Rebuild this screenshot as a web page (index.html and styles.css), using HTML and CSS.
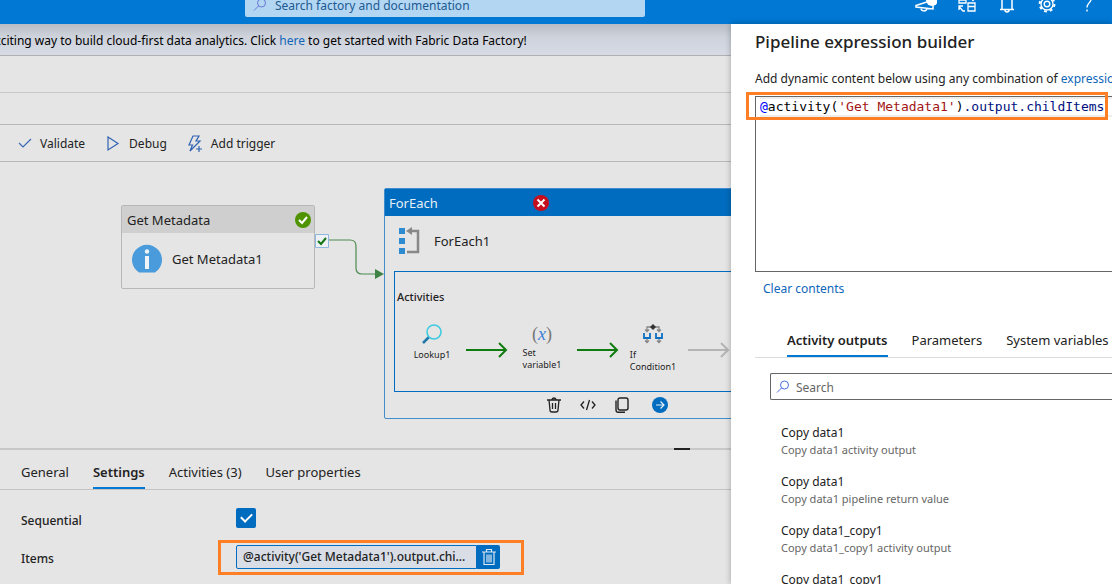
FILE: index.html
```html
<!DOCTYPE html>
<html lang="en">
<head>
    <meta charset="UTF-8">
    <meta name="viewport" content="width=device-width, initial-scale=1.0">
    <title>Azure Data Factory</title>
    <link rel="stylesheet" href="styles.css">
</head>
<body>
    <header class="topbar">
        <label class="topbar-search">
            <svg width="14" height="14" viewBox="0 0 14 14" fill="none" stroke="#6a78d8"><circle cx="8.5" cy="5" r="4"/><path d="M5.5 8L1 12.5"/></svg>
            <input type="text" placeholder="Search factory and documentation" aria-label="Search factory and documentation">
        </label>
        <nav class="topbar-icons">
            <button type="button" aria-label="Announcements">
                <svg width="24" height="20" viewBox="0 0 24 20" fill="none" stroke="#fff" stroke-width="1.5"><path d="M3 11.500L20 6v9L3 13zM8 14c0 3.500 5 4 6 .5"/><circle cx="19" cy="6" r="6" fill="#fff" stroke="none"/></svg>
            </button>
            <button type="button" aria-label="Switch factory">
                <svg width="20" height="20" viewBox="0 0 20 20" fill="none" stroke="#fff" stroke-width="1.300"><path d="M2 3h7v6H2zM2 6h7M11 9h7v8h-7zM11 12.500h7M12 3h4v3M14 4.500L16 6.500l2-2M8 17H6L2 12.500M2 16v-4h4"/></svg>
            </button>
            <button type="button" aria-label="Notifications">
                <svg width="20" height="20" viewBox="0 0 20 20" fill="none" stroke="#fff" stroke-width="1.500"><path d="M5 15V7a5 5 0 0 1 10 0v8M3 15.500h14M8 16c0 2.500 4 2.500 4 0"/></svg>
            </button>
            <button type="button" aria-label="Settings">
                <svg width="20" height="20" viewBox="0 0 20 20" fill="none" stroke="#fff"><circle cx="10" cy="10" r="2.800" stroke-width="1.400"/><circle cx="10" cy="10" r="6" stroke-width="1.300"/><circle cx="10" cy="10" r="7.400" stroke-width="2" stroke-dasharray="2.900 2.910"/></svg>
            </button>
            <button type="button" aria-label="Help">
                <svg width="20" height="20" viewBox="0 0 20 20" fill="none" stroke="#fff" stroke-width="1.400"><path d="M6.500 6c0-5 7.500-5 7.500-.5 0 3-4 3.500-4 8M10 15.500v2"/></svg>
            </button>
        </nav>
    </header>

    <div class="layout">
        <main class="workspace">
            <div class="notice"><p>exciting way to build cloud-first data analytics. Click <a href="#">here</a> to get started with Fabric Data Factory!</p></div>
            <div class="strip strip-top"></div>
            <div class="strip"></div>
            <div class="toolbar">
                <button type="button">
                    <svg width="14" height="14" viewBox="0 0 14 14" fill="none" stroke="#3a68b5" stroke-width="1.200"><path d="M1 6l4 4 8-8"/></svg>
                    Validate
                </button>
                <button type="button">
                    <svg width="16" height="16" viewBox="0 0 16 16" fill="none" stroke="#2f62b3" stroke-width="1.200"><path d="M3 1l10 6.500L3 14z"/></svg>
                    Debug
                </button>
                <button type="button">
                    <svg width="16" height="18" viewBox="0 0 16 18" fill="none" stroke="#2f62b3" stroke-width="1.200"><path d="M6 1h6L9 6h4L3 16l2.500-6H2zM12 11v6M9 14h6"/></svg>
                    Add trigger
                </button>
            </div>

            <section class="canvas">
                <article class="node metadata">
                    <div class="node-head">
                        <span>Get Metadata</span>
                        <svg width="16" height="16" viewBox="0 0 16 16"><circle cx="8" cy="8" r="8" fill="#4f9400"/><path d="M4 8l3 3 5-6" fill="none" stroke="#fff" stroke-width="2"/></svg>
                    </div>
                    <div class="node-body">
                        <svg width="30" height="30" viewBox="0 0 30 30"><path d="M7 28.500a15 15 0 1 1 16 0z" fill="#4a9bdb"/><circle cx="15" cy="7.500" r="2.200" fill="#f0f4f8"/><path d="M13 12h4v13h-4z" fill="#f0f4f8"/></svg>
                        <span>Get Metadata1</span>
                    </div>
                </article>

                <svg class="connector" width="56" height="42" viewBox="0 0 56 42"><path d="M0 5h22q6 0 6 6v22q0 6 6 6h13" transform="translate(0 -1)" fill="none" stroke="#4b8b50" stroke-width="1.200"/><path d="M47 33l9 5-9 5z" fill="#3f8446"/></svg>
                <svg class="success" width="14" height="14" viewBox="0 0 14 14"><path d="M.5.5h13v13H.5z" fill="#edf1f5" stroke="#8fb6dc"/><path d="M3 7l3 3 5-6" fill="none" stroke="#127512" stroke-width="2"/></svg>

                <article class="node foreach">
                    <div class="node-head">
                        <span>ForEach</span>
                        <svg width="16" height="16" viewBox="0 0 16 16"><circle cx="8" cy="8" r="8" fill="#c50f1f"/><path d="M4.500 4.500l7 7M11.500 4.500l-7 7" stroke="#fff" stroke-width="2"/></svg>
                    </div>
                    <div class="node-body">
                        <svg width="22" height="28" viewBox="0 0 22 28"><path d="M1 1h6v6H1zM1 11h6v6H1zM1 21h6v6H1z" fill="#2f8bd0"/><path d="M12 4h8v21H9" fill="none" stroke="#888" stroke-width="2.500"/><path d="M14 0v8L8 4z" fill="#888"/></svg>
                        <span>ForEach1</span>
                    </div>
                    <div class="inner">
                        <h2>Activities</h2>
                        <div class="steps">
                            <div class="step lookup">
                                <svg width="20" height="20" viewBox="0 0 20 20" fill="none"><path d="M7 13l-6 6" stroke="#1f78a8" stroke-width="2.500"/><circle cx="12" cy="8" r="7" stroke="#3ecbe0" stroke-width="1.600"/></svg>
                                <span>Lookup1</span>
                            </div>
                            <svg class="arrow" width="42" height="16" viewBox="0 0 42 16" fill="none" stroke="#107c10" stroke-width="2"><path d="M0 8h40M33 1l7 7-7 7"/></svg>
                            <div class="step variable">
                                <span class="var-icon">(<i>x</i>)</span>
                                <span>Set<br>variable1</span>
                            </div>
                            <svg class="arrow" width="42" height="16" viewBox="0 0 42 16" fill="none" stroke="#107c10" stroke-width="2"><path d="M0 8h40M33 1l7 7-7 7"/></svg>
                            <div class="step condition">
                                <svg width="20" height="20" viewBox="0 0 20 20" fill="none"><path d="M8 3H4v4M12 3h4v4M4 14v4M16 14v4M2 5.500l2 2 2-2M14 5.500l2 2 2-2M2 16.500l2 2 2-2M14 16.500l2 2 2-2" stroke="#858585" stroke-width="1.300"/><path d="M10 0l3 3-3 3-3-3z" fill="#333"/><path d="M1 9v5h6V9M13 9v5h6V9" stroke="#0f6fc0" stroke-width="1.800"/></svg>
                                <span>If<br>Condition1</span>
                            </div>
                            <svg class="arrow" width="42" height="16" viewBox="0 0 42 16" fill="none" stroke="#b5b5b5" stroke-width="2"><path d="M0 8h40M33 1l7 7-7 7"/></svg>
                        </div>
                    </div>
                    <div class="node-actions">
                        <button type="button" aria-label="Delete"><svg width="16" height="16" viewBox="0 0 16 16" fill="none" stroke="#222" stroke-width="1.300"><path d="M1 3h14M5.500 3q2.500-4 5 0M3 3l1 10q0 2 2 2h4q2 0 2-2l1-10M6.500 6v6M9.500 6v6"/></svg></button>
                        <button type="button" aria-label="View code"><svg width="16" height="16" viewBox="0 0 16 16" fill="none" stroke="#222" stroke-width="1.300"><path d="M4 4.500L1 8l3 3.500M12 4.500L15 8l-3 3.500M9.500 3l-3 10"/></svg></button>
                        <button type="button" aria-label="Clone"><svg width="16" height="16" viewBox="0 0 16 16" fill="none" stroke="#222" stroke-width="1.400"><rect x="4" y="1" width="10" height="12" rx="2"/><path d="M2 3.500V13q0 2.300 2.300 2.300H11"/></svg></button>
                        <button type="button" class="run" aria-label="Run"><svg width="16" height="16" viewBox="0 0 16 16" fill="none" stroke="#e6eef6" stroke-width="1.200"><circle cx="8" cy="8" r="8" fill="#006cbf" stroke="none"/><path d="M4 8h8M8.500 4.500L12 8l-3.500 3.500"/></svg></button>
                    </div>
                </article>
            </section>

            <div class="splitter"><span></span></div>

            <section class="properties">
                <div class="tabs">
                    <button type="button">General</button>
                    <button type="button" class="active">Settings</button>
                    <button type="button">Activities (3)</button>
                    <button type="button">User properties</button>
                </div>
                <form class="settings">
                    <label for="sequential">Sequential</label>
                    <input type="checkbox" id="sequential" checked>
                    <label for="items">Items</label>
                    <div class="items-field">
                        <input type="text" id="items" value="@activity('Get Metadata1').output.chi..." readonly>
                        <button type="button" aria-label="Delete expression"><svg width="14" height="18" viewBox="0 0 14 18" fill="none" stroke="#dce8f3" stroke-width="1.200"><path d="M0 4h14M4.500 4V1.500h5V4M2 4v12.500h10V4M5 6.500v8M7 6.500v8M9 6.500v8"/></svg></button>
                    </div>
                </form>
            </section>
        </main>

        <aside class="panel">
            <h1>Pipeline expression builder</h1>
            <p class="hint">Add dynamic content below using any combination of <a href="#">expressions</a></p>
            <div class="editor-wrap">
                <div class="editor" role="textbox" aria-label="Expression" aria-multiline="true" contenteditable="true" spellcheck="false"><div class="line"><span class="at">@</span>activity(<span class="str">'Get Metadata1'</span>)<span class="prop">.output.childItems</span></div></div>
                <div class="mark mark-editor"></div>
            </div>
            <a class="clear" href="#">Clear contents</a>
            <div class="tabs">
                <button type="button" class="active">Activity outputs</button>
                <button type="button">Parameters</button>
                <button type="button">System variables</button>
            </div>
            <label class="panel-search">
                <svg width="14" height="14" viewBox="0 0 14 14" fill="none" stroke="#4a6fe0"><circle cx="8.500" cy="5" r="4"/><path d="M5.500 8L1 12.500"/></svg>
                <input type="text" placeholder="Search" aria-label="Search">
            </label>
            <ul class="outputs">
                <li><b>Copy data1</b><span>Copy data1 activity output</span></li>
                <li><b>Copy data1</b><span>Copy data1 pipeline return value</span></li>
                <li><b>Copy data1_copy1</b><span>Copy data1_copy1 activity output</span></li>
                <li><b>Copy data1_copy1</b></li>
            </ul>
        </aside>
    </div>
    <div class="mark mark-items"></div>
</body>
</html>
```

FILE: styles.css
```css
* {
    box-sizing: border-box;
}

body {
    margin: 0;
    height: 100vh;
    display: flex;
    flex-direction: column;
    overflow: hidden;
    font-family: "Noto Sans", "Open Sans", sans-serif;
    font-size: 12px;
    line-height: 16px;
    color: #222;
    background-color: #fff;
}

button,
input {
    font: inherit;
    color: inherit;
}

button {
    border: 0;
    padding: 0;
    background: none;
    white-space: nowrap;
}

a {
    color: #0f66b8;
    text-decoration: none;
}

h1,
h2,
p,
ul {
    margin: 0;
    padding: 0;
}

svg {
    display: block;
    flex: none;
}

/* Top bar */
.topbar {
    height: 24px;
    flex: none;
    display: flex;
    align-items: flex-end;
    justify-content: space-between;
    padding: 0 15px 7px 245px;
    background-color: #0078d4;
}

.topbar-search {
    flex: 0 1 400px;
    height: 24px;
    display: flex;
    align-items: center;
    gap: 8px;
    padding-left: 8px;
    border-radius: 2px;
    background-color: #b3d6f2;
}

.topbar-search input {
    flex: 1;
    border: 0;
    background: none;
    padding: 2px 0 0;
}

.topbar-search input::placeholder {
    color: #1c5a94;
    opacity: 1;
}

.topbar-icons {
    display: flex;
    gap: 20px;
    margin-bottom: 3px;
}

/* Workspace */
.layout {
    flex: 1;
    min-height: 0;
    display: flex;
}

.workspace {
    flex: 1;
    min-width: 0;
    display: flex;
    flex-direction: column;
    background-color: #e5e5e5;
}

.notice {
    height: 32px;
    display: flex;
    align-items: center;
    overflow: hidden;
    padding-top: 2px;
    white-space: nowrap;
    color: #000;
    border-bottom: 1px solid #b0b0b0;
    background: linear-gradient(#b7bcc5, #cdd2db 40%, #d7dbe5);
}

.notice p {
    text-indent: -12px;
}

.strip {
    height: 32px;
    border-bottom: 1px solid #b8b8b8;
}

.strip-top {
    height: 37px;
    border-color: #c8c8c8;
}

.toolbar {
    height: 37px;
    display: flex;
    align-items: center;
    gap: 20px;
    padding: 1px 0 0 18px;
    border-bottom: 1px solid #b8b8b8;
}

.toolbar button {
    display: flex;
    align-items: center;
    gap: 8px;
}

/* Canvas */
.canvas {
    flex: 1;
    min-height: 0;
    position: relative;
    overflow: hidden;
}

.node {
    position: absolute;
    font-size: 13px;
}

.node-head {
    height: 27px;
    display: flex;
    align-items: center;
}

.node-body {
    display: flex;
    align-items: center;
}

.metadata {
    left: 121px;
    top: 43px;
    width: 194px;
    height: 84px;
    border: 1px solid #b8b8b8;
    border-radius: 2px;
}

.metadata .node-head {
    justify-content: space-between;
    padding: 0 3px 0 5px;
    background-color: #cfcfcf;
}

.metadata .node-body {
    gap: 10px;
    padding: 11px 10px;
}

.connector {
    position: absolute;
    left: 328px;
    top: 74px;
    overflow: visible;
}

.success {
    position: absolute;
    left: 315px;
    top: 72px;
}

.foreach {
    left: 384px;
    top: 26px;
    width: 560px;
    border: 1px solid #3f8dcd;
    border-radius: 2px;
}

.foreach .node-head {
    gap: 95px;
    padding-left: 4px;
    color: #e6eef6;
    background-color: #006cbf;
}

.foreach .node-body {
    height: 50px;
    gap: 14px;
    padding-left: 13px;
}

.inner {
    height: 121px;
    margin: 5px 9px 0;
    padding: 17px 0 0 2px;
    border: 1px solid #006cbf;
}

.inner h2 {
    font-size: 11px;
    line-height: 16px;
    font-weight: 500;
}

.steps {
    display: grid;
    grid-template-columns: 54px 56px 55px 51px 60px 42px;
    padding: 19px 0 0 15px;
}

.step {
    display: flex;
    flex-direction: column;
    width: 40px;
    align-items: center;
    gap: 5px;
    font-size: 9px;
    line-height: 12px;
}

.step.variable {
    gap: 3px;
}

.step.condition {
    width: 50px;
}

.var-icon {
    font: 18px/20px "Liberation Serif", serif;
    color: #777;
}

.var-icon i {
    color: #3d7fd6;
}

.arrow {
    margin-top: 18px;
}

.node-actions {
    height: 26px;
    display: flex;
    align-items: center;
    gap: 18px;
    padding-left: 161px;
}

.node-actions .run {
    margin-left: 4px;
}

.splitter {
    height: 2px;
    display: flex;
    justify-content: flex-end;
    padding-right: 41px;
    background-color: #c8c8c8;
}

.splitter span {
    width: 16px;
    background-color: #222;
}

/* Tabs */
.tabs {
    display: flex;
    gap: 24px;
    overflow: hidden;
    font-size: 13px;
}

.tabs button {
    border-bottom: 2px solid transparent;
}

.tabs .active {
    font-weight: 600;
    border-color: #0078d4;
}

.properties {
    height: 134px;
}

.properties .tabs {
    height: 40px;
    padding-left: 21px;
    border-bottom: 1px solid #c4c4c4;
}

.properties .tabs button {
    padding-top: 7px;
}

.settings {
    display: grid;
    grid-template-columns: 215px 264px;
    grid-auto-rows: 38px;
    align-items: center;
    padding: 10px 0 0 21px;
}

.settings label {
    padding-top: 3px;
    font-weight: 500;
}

.settings input[type="checkbox"] {
    appearance: none;
    width: 20px;
    height: 20px;
    margin: 0 0 2px;
    display: grid;
    place-items: center;
    border-radius: 2px;
    background-color: #006cbf;
}

.settings input[type="checkbox"]::after {
    content: "";
    width: 9px;
    height: 5px;
    margin-bottom: 3px;
    border: solid #fff;
    border-width: 0 0 2px 2px;
    transform: rotate(-45deg);
}

.items-field {
    height: 24px;
    display: flex;
}

.items-field input {
    flex: 1;
    min-width: 0;
    padding: 0 6px;
    border: 1px solid #006cbf;
    border-radius: 2px 0 0 2px;
    font-weight: 500;
    background-color: #d8dde6;
}

.items-field button {
    width: 23px;
    display: grid;
    place-items: center;
    border-radius: 0 2px 2px 0;
    background-color: #006cbf;
}

/* Expression panel */
.panel {
    flex: 0 0 381px;
    min-width: 0;
    padding: 6px 0 0 24px;
    position: relative;
    overflow: hidden;
    background-color: #fff;
    box-shadow: 0 0 6px rgba(0, 0, 0, 0.3);
}

.panel h1 {
    font-size: 17px;
    line-height: 24px;
    font-weight: 500;
}

.hint {
    margin-top: 17px;
    white-space: nowrap;
}

.editor-wrap {
    position: relative;
    margin-top: 9px;
}

.editor {
    height: 176px;
    padding-left: 4px;
    border: 1px solid #666;
    border-right: 0;
    font: 13px/18px "DejaVu Sans Mono", monospace;
    color: #000;
}

.line {
    height: 20px;
    border: 2px solid #eee;
    border-right: 0;
    border-left: 0;
    line-height: 15px;
    white-space: nowrap;
}

.at {
    color: #00f;
}

.str {
    color: #a31515;
}

.prop {
    color: #001080;
}

.mark {
    position: absolute;
    border: 3px solid #ff7f27;
    pointer-events: none;
}

.mark-editor {
    left: -9px;
    top: -4px;
    right: 4px;
    height: 28px;
}

.mark-items {
    left: 218px;
    bottom: 9px;
    width: 306px;
    height: 35px;
}

.clear {
    display: block;
    margin: 9px 0 0 8px;
}

.panel .tabs {
    height: 34px;
    margin-top: 27px;
    padding-left: 32px;
    border-bottom: 1px solid #ddd;
}

.panel-search {
    height: 27px;
    display: flex;
    align-items: center;
    gap: 6px;
    margin: 15px 0 0 15px;
    padding-left: 5px;
    border: 1px solid #666;
    border-right: 0;
    border-radius: 2px 0 0 2px;
}

.panel-search input {
    flex: 1;
    min-width: 0;
    padding: 2px 0 0;
    border: 0;
}

.panel-search input::placeholder {
    color: #666;
    opacity: 1;
}

.outputs {
    list-style: none;
    margin: 24px 0 0 26px;
}

.outputs li {
    height: 49px;
    display: flex;
    flex-direction: column;
}

.outputs b {
    font-weight: normal;
    line-height: 18px;
}

.outputs span {
    font-size: 11px;
    line-height: 16px;
    color: #666;
}
```
